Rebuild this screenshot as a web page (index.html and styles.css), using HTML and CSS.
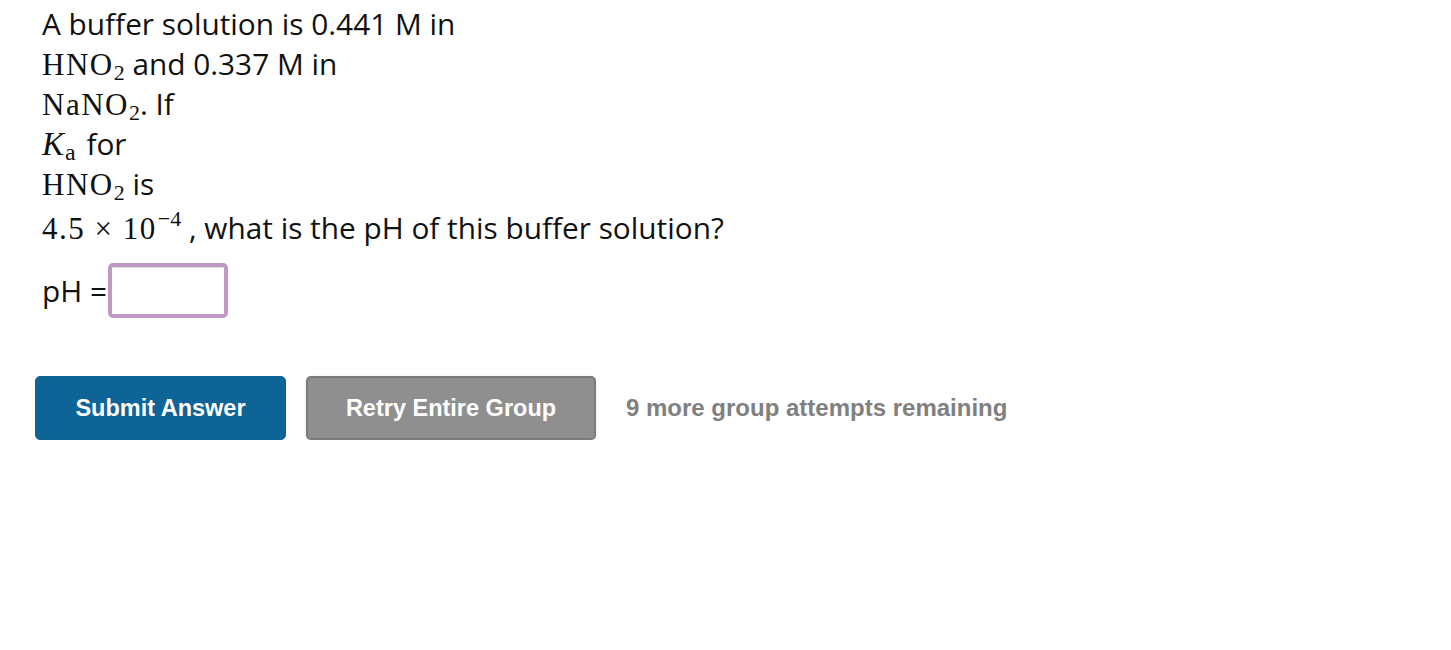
FILE: index.html
```html
<!DOCTYPE html>
<html>
<head>
<meta charset="utf-8">
<link rel="stylesheet" href="styles.css">
</head>
<body>
<div class="page">
  <div class="question">
    <div class="line">A buffer solution is 0.441 M in</div>
    <div class="line"><span class="m">HNO<sub>2</sub></span> and 0.337 M in</div>
    <div class="line"><span class="m">NaNO<sub>2</sub></span>. If</div>
    <div class="line"><span class="m ka"><i>K</i><sub>a</sub></span> for</div>
    <div class="line"><span class="m">HNO<sub>2</sub></span> is</div>
    <div class="line sci"><span class="m">4.5 × 10<sup>−4</sup></span> , what is the pH of this buffer solution?</div>
    <div class="answer">
      <span class="label">pH =</span><span class="input"></span>
    </div>
  </div>
  <div class="actions">
    <button class="btn primary">Submit Answer</button>
    <button class="btn secondary">Retry Entire Group</button>
    <span class="attempts">9 more group attempts remaining</span>
  </div>
</div>
</body>
</html>
```
FILE: styles.css
```css
html, body {
  margin: 0;
  padding: 0;
  background: #fff;
}
.page {
  padding: 4px 0 0 0;
}
.question {
  padding-left: 42px;
  font-family: "Open Sans", "Noto Sans", sans-serif;
  font-size: 29.8px;
  color: #111;
}
.line {
  line-height: 40px;
  height: 40px;
  white-space: nowrap;
}
.line.sci {
  height: 46px;
  line-height: 48px;
}
.m {
  font-family: "Liberation Serif", "DejaVu Serif", serif;
  font-size: 31px;
  letter-spacing: 1.5px;
}
.m sub {
  font-size: 22px;
  vertical-align: -5px;
  line-height: 0;
  letter-spacing: 0;
}
.m sup {
  font-size: 22px;
  vertical-align: 13px;
  line-height: 0;
  letter-spacing: 0;
  margin-left: 1px;
}
.ka {
  font-size: 33px;
  letter-spacing: 0;
  margin-right: 3px;
}
.ka sub {
  font-size: 24px;
  margin-left: 1px;
}
.answer {
  display: flex;
  align-items: center;
  margin-top: 13px;
  height: 55px;
}
.label {
  margin-right: 1px;
}
.input {
  display: block;
  box-sizing: border-box;
  width: 120px;
  height: 55px;
  border: 4px solid #c197c5;
  border-radius: 5px;
  background: #fff;
  box-shadow: inset 0 1px 1px #ddd;
}
.actions {
  display: flex;
  align-items: center;
  margin-top: 58px;
  padding-left: 35px;
}
.btn {
  font-family: "Liberation Sans", Arial, sans-serif;
  font-weight: bold;
  font-size: 23.5px;
  color: #fff;
  height: 64px;
  border-radius: 5px;
  padding: 0;
  margin: 0;
  cursor: pointer;
}
.primary {
  width: 251px;
  background: #0e6397;
  border: 1px solid #0e6397;
}
.secondary {
  width: 290px;
  margin-left: 20px;
  background: #8f8f8f;
  border: 2px solid #7b7b7b;
  box-shadow: 0 1px 3px rgba(0,0,0,0.15);
}
.attempts {
  margin-left: 30px;
  font-family: "Liberation Sans", Arial, sans-serif;
  font-weight: bold;
  font-size: 24px;
  color: #808080;
}
```
